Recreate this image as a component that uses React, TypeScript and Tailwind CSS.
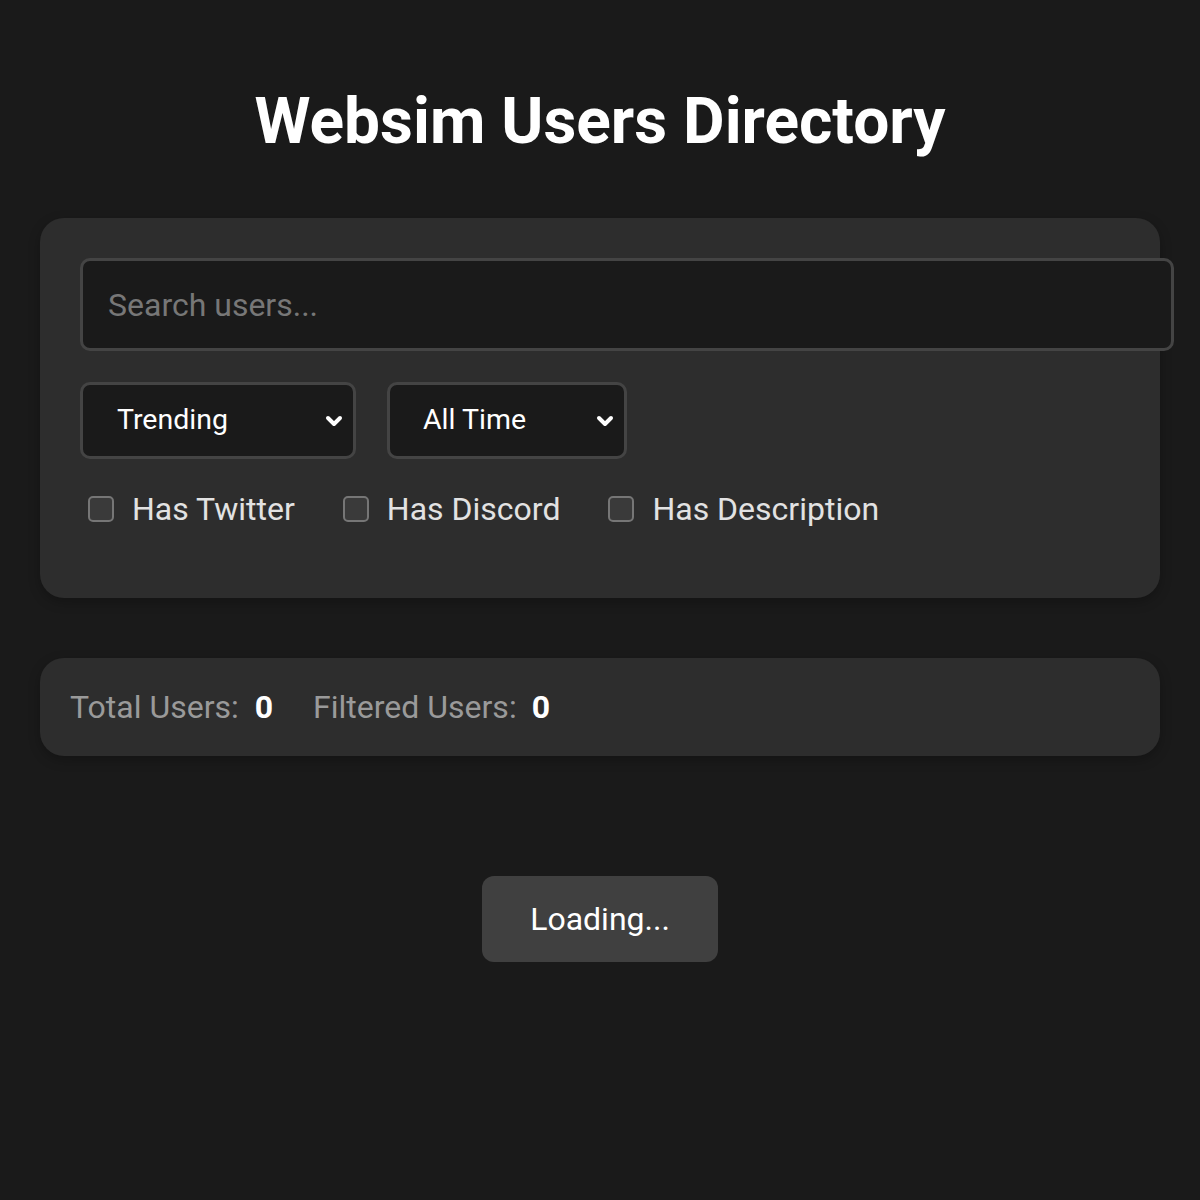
import { ChevronDown } from "lucide-react";

const Filter = ({ label }: { label: string }) => (
  <label className="flex items-center gap-[18px]">
    <span className="w-[26px] h-[26px] rounded-[5px] border-2 border-[#767676] bg-[#3a3a3a]" />
    <span className="text-[32px] text-[#e2e2e2]">{label}</span>
  </label>
);

const Select = ({ value, width, pad }: { value: string; width: string; pad: string }) => (
  <div
    className={`${width} ${pad} h-[77px] flex items-center justify-between pr-[7px] bg-[#1a1a1a] border-[3px] border-[#444] rounded-[10px] text-[28.5px] text-white`}
  >
    <span>{value}</span>
    <ChevronDown className="w-[24px] h-[24px]" strokeWidth={4} />
  </div>
);

export default function App() {
  return (
    <div
      className="min-h-[1200px] bg-[#1a1a1a] px-[40px] pt-[84px]"
      style={{ fontFamily: "Roboto, 'Noto Sans', sans-serif" }}
    >
      <h1 className="text-center text-[64px] font-bold leading-[75px] text-white mb-[59px]">
        Websim Users Directory
      </h1>

      <div className="bg-[#2d2d2d] rounded-[24px] p-[40px] h-[380px] shadow-[0_4px_12px_rgba(0,0,0,0.25)]">
        <div className="w-[1094px] h-[93px] flex items-center pl-[25px] bg-[#1a1a1a] border-[3px] border-[#444] rounded-[10px] text-[32px] text-[#777]">
          Search users...
        </div>
        <div className="flex gap-[31px] mt-[31px]">
          <Select value="Trending" width="w-[276px]" pad="pl-[34px]" />
          <Select value="All Time" width="w-[240px]" pad="pl-[33px]" />
        </div>
        <div className="flex items-center gap-[48px] mt-[26px] pl-[8px]">
          <Filter label="Has Twitter" />
          <Filter label="Has Discord" />
          <Filter label="Has Description" />
        </div>
      </div>

      <div className="mt-[60px] bg-[#2d2d2d] rounded-[24px] h-[98px] px-[30px] flex items-center gap-[40px] text-[32px] shadow-[0_4px_12px_rgba(0,0,0,0.25)]">
        <div className="text-[#9a9a9a]">
          Total Users:<span className="ml-[16px] font-bold text-white">0</span>
        </div>
        <div className="text-[#9a9a9a]">
          Filtered Users:<span className="ml-[15px] font-bold text-white">0</span>
        </div>
      </div>

      <div className="flex justify-center mt-[120px]">
        <div className="w-[236px] h-[86px] flex items-center justify-center bg-[#404040] rounded-[12px] text-[32px] text-white">
          Loading...
        </div>
      </div>
    </div>
  );
}
